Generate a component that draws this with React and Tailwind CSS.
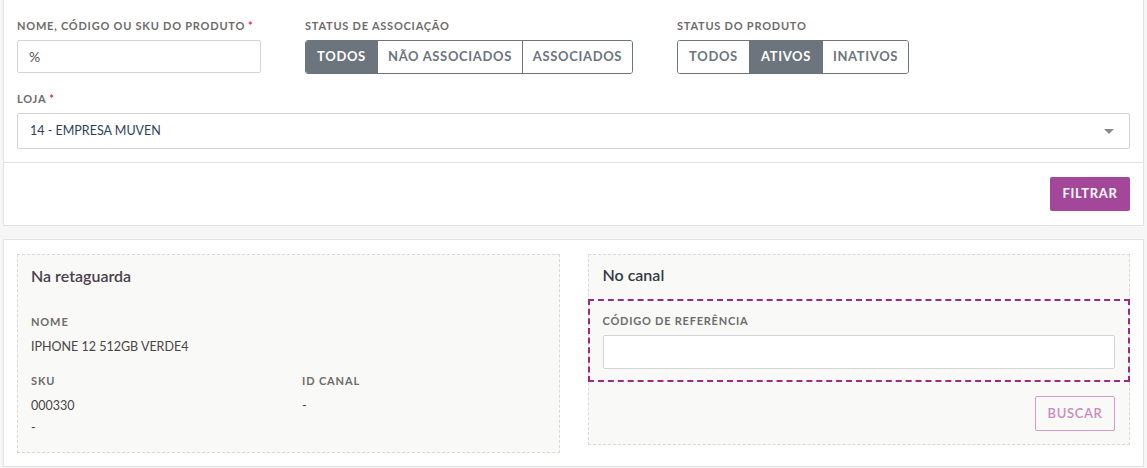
import { useState } from "react";

const font = { fontFamily: '"Source Sans Pro", Lato, "Noto Sans", sans-serif' };

function Label({ children, required }) {
  return (
    <div className="whitespace-nowrap text-[11px] font-bold uppercase tracking-[0.07em] text-[#6e6b6b] leading-[15px] mb-[7px]">
      {children}
      {required ? <span className="text-[#d9363e] ml-[3px]">*</span> : null}
    </div>
  );
}

function Segmented({ options, active, onChange }) {
  return (
    <div className="flex h-[34px] rounded-[3px] border border-[#6c757d] overflow-hidden">
      {options.map((opt, i) => (
        <button
          key={opt.label}
          onClick={() => onChange(i)}
          className={`h-full whitespace-nowrap text-[13px] font-bold uppercase tracking-[0.05em] ${opt.w} ${
            i > 0 ? "border-l border-[#6c757d]" : ""
          } ${active === i ? "bg-[#6c757d] text-white" : "bg-white text-[#6c757d]"}`}
        >
          {opt.label}
        </button>
      ))}
    </div>
  );
}

function Field({ label, value, className = "" }) {
  return (
    <div className={className}>
      <div className="text-[11px] font-bold uppercase tracking-[0.08em] text-[#6e6b6b] leading-[15px]">
        {label}
      </div>
      <div className="text-[12.5px] text-[#4a4545] leading-[16px] mt-[10px]">{value}</div>
    </div>
  );
}

export default function App() {
  const [assoc, setAssoc] = useState(0);
  const [status, setStatus] = useState(1);

  return (
    <div className="w-full h-[468px] bg-[#f6f6f6] px-[3px] overflow-hidden" style={font}>
      {/* filtros */}
      <div className="bg-white border border-[#e2e2e4] border-t-0">
        <div className="px-[13px] pt-[18px] pb-[13px] border-b border-[#e2e2e4]">
          <div className="flex gap-[44px]">
            <div className="w-[244px]">
              <Label required>Nome, código ou SKU do produto</Label>
              <input
                defaultValue="%"
                className="w-full h-[33px] border border-[#d3d3d8] rounded-[2px] px-[11px] text-[14px] text-[#555] outline-none"
              />
            </div>
            <div>
              <Label>Status de associação</Label>
              <Segmented
                active={assoc}
                onChange={setAssoc}
                options={[
                  { label: "Todos", w: "w-[71px]" },
                  { label: "Não associados", w: "w-[145px]" },
                  { label: "Associados", w: "w-[110px]" },
                ]}
              />
            </div>
            <div>
              <Label>Status do produto</Label>
              <Segmented
                active={status}
                onChange={setStatus}
                options={[
                  { label: "Todos", w: "w-[71px]" },
                  { label: "Ativos", w: "w-[73px]" },
                  { label: "Inativos", w: "w-[86px]" },
                ]}
              />
            </div>
          </div>
          <div className="mt-[17px]">
            <Label required>Loja</Label>
            <div className="relative h-[36px] border border-[#d3d3d8] rounded-[2px] flex items-center px-[12px]">
              <span className="text-[12.5px] text-[#2e3f5c]">14 - EMPRESA MUVEN</span>
              <span className="absolute right-[15px] top-[15px] w-0 h-0 border-l-[5px] border-r-[5px] border-t-[5px] border-l-transparent border-r-transparent border-t-[#8a8a8a]" />
            </div>
          </div>
        </div>
        <div className="flex justify-end px-[13px] pt-[14px] pb-[14px]">
          <button className="h-[34px] w-[80px] rounded-[2px] bg-[#a3479a] text-white text-[13px] font-bold uppercase tracking-[0.05em]">
            Filtrar
          </button>
        </div>
      </div>

      {/* associacao */}
      <div className="mt-[13px] bg-white border border-[#e2e2e4] px-[13px] pt-[14px] pb-[13px] grid grid-cols-2 gap-[28px] items-start">
        <div className="min-w-0 h-[199px] bg-[#f9f9f8] border border-dashed border-[#d9d9d9] px-[13px] pt-[11px]">
          <div className="text-[16px] font-semibold text-[#4b3f4b] leading-[20px]">Na retaguarda</div>
          <Field label="Nome" value="IPHONE 12 512GB VERDE4" className="mt-[28px]" />
          <div className="flex mt-[18px]">
            <div className="w-[271px]">
              <Field label="SKU" value="000330" />
              <div className="text-[12.5px] text-[#4a4545] leading-[16px] mt-[6px]">-</div>
            </div>
            <Field label="ID canal" value="-" />
          </div>
        </div>

        <div className="min-w-0 h-[191px] bg-[#f9f9f8] border border-dashed border-[#d9d9d9] flex flex-col">
          <div className="px-[14px] pt-[10px] h-[44px] text-[16px] font-semibold text-[#333a46] leading-[20px]">
            No canal
          </div>
          <div className="-mx-px border-2 border-dashed border-[#9c2a80] px-[13px] pt-[12px] pb-[11px]">
            <Label>Código de referência</Label>
            <input className="w-full h-[34px] bg-white border border-[#d3d3d8] rounded-[2px] outline-none" />
          </div>
          <div className="flex justify-end px-[14px] pt-[14px]">
            <button className="h-[35px] w-[80px] rounded-[2px] border border-[#d49bcb] text-[#c98bc0] text-[13px] font-semibold uppercase tracking-[0.05em]">
              Buscar
            </button>
          </div>
        </div>
      </div>
    </div>
  );
}
